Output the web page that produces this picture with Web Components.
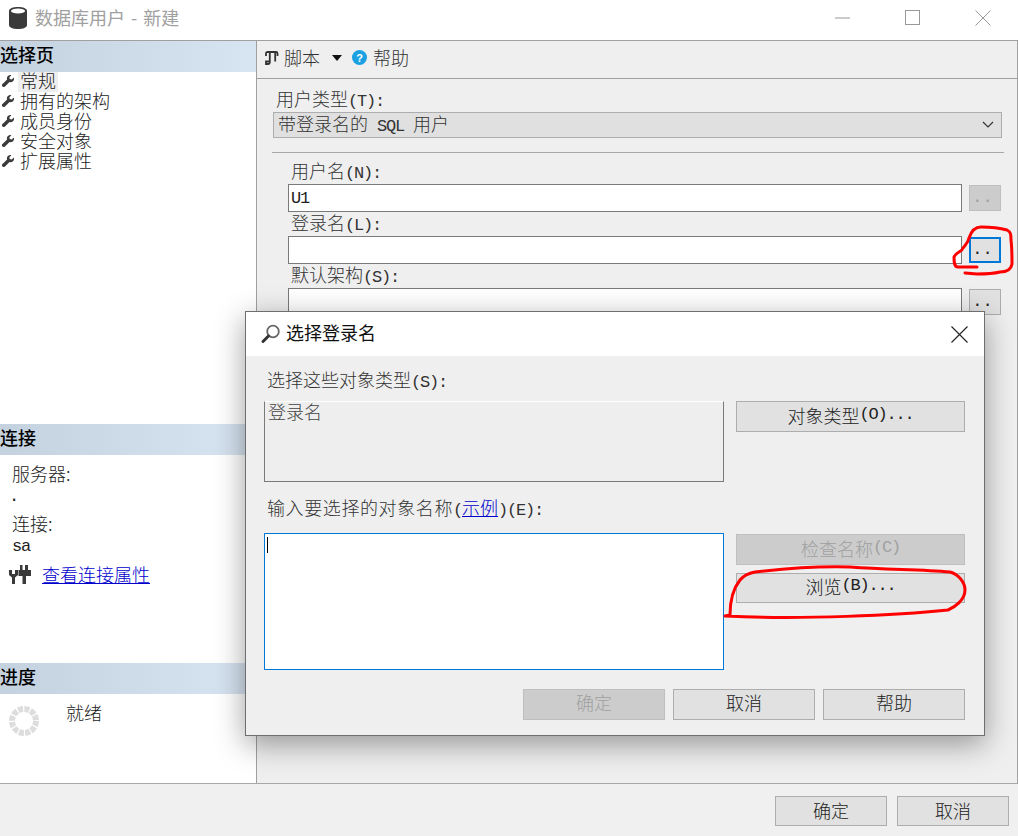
<!DOCTYPE html>
<html lang="zh"><head><meta charset="utf-8"><title>数据库用户 - 新建</title>
<style>
html,body{margin:0;padding:0;background:#f0f0f0}
body{font:18px/24px "Noto Sans CJK SC","Liberation Sans",sans-serif;color:#222;font-weight:300}
</style></head><body>
<db-app></db-app>
<script>
function def(name,css,html){
  customElements.define(name,class extends HTMLElement{
    constructor(){super();const r=this.attachShadow({mode:'open'});
      r.innerHTML='<style>'+css+'</style>'+(typeof html==='function'?html(this):html);}
  });
}
const WRENCH='<svg width="12" height="12" viewBox="0 0 12 12"><path fill="#3c3c3c" d="M8.600 0A3.400 3.400 0 0 0 5.100 4.500L.5 8.900a1.800 1.800 0 0 0 2.500 2.600L7.500 7A3.400 3.400 0 0 0 12 3.400L11.800 2.600 9.700 4.500 7.800 4 7.400 2.200 9.400 .2z"/></svg>';

def('l-t',':host{font-family:"Liberation Mono",monospace;font-size:17px;letter-spacing:-1.2px}','<slot></slot>');

def('title-bar',`:host{display:flex;align-items:center;height:40px;box-sizing:content-box;background:#fff;border-bottom:1px solid #a0a0a0;color:#a0a0a0;font-weight:400}
.w{display:flex;align-items:center;width:100%;height:35px;margin-bottom:5px}
.ic{margin:0 8px 0 9px;display:flex}.t{flex:1;word-spacing:2px;line-height:20px;padding-bottom:2px}.b{width:70px;display:flex;justify-content:center}
.r{display:flex}`,
`<div class="w"><span class="ic"><svg width="18" height="22" viewBox="0 0 18 22"><path fill="#3a3a3a" d="M0 4C0 1.500 4 0 9 0s9 1.500 9 4v14c0 2.500-4 4-9 4s-9-1.500-9-4z"/><ellipse cx="9" cy="4" rx="7" ry="2.400" fill="#fff"/></svg></span>
<span class="t">数据库用户 - 新建</span>
<span class="r">
<span class="b"><svg width="16" height="16"><path d="M0 8h15" stroke="#999"/></svg></span>
<span class="b"><svg width="16" height="16"><rect x=".5" y=".5" width="14" height="14" fill="none" stroke="#999"/></svg></span>
<span class="b"><svg width="16" height="16"><path d="M.5 .5l15 15M15.500 .5l-15 15" stroke="#999"/></svg></span>
</span></div>`);

def('side-head',`:host{display:flex;align-items:center;height:31px;box-sizing:border-box;padding-bottom:6px;background:linear-gradient(90deg,#c4d2e0,#d7e4f1);color:#000;font-weight:500}`,'<slot></slot>');

def('nav-item',`:host{display:flex;align-items:center;height:20px;color:#222}
.i{display:flex;width:18px;padding:0 0 2px 2px;box-sizing:border-box}
.t{padding:0 2px 4px;line-height:16px}:host([on]) .t{background:#eee}`,
`<span class="i">${WRENCH}</span><span class="t"><slot></slot></span>`);

def('side-panel',`:host{display:flex;flex-direction:column;width:256px;background:#fff;border-right:1px solid #a0a0a0;flex:none}
.a{height:352px}.b{height:208px;padding:10px 0 0 12px;box-sizing:border-box}.c{flex:1;display:flex}
.sp{margin:12px 0 0 9px;width:30px;height:30px}
.ln{height:16px;line-height:16px;padding-bottom:4px}.m{margin-top:10px}
.dot{margin-left:-3px}
.lk{display:flex;align-items:center;margin:10px 0 0 -3px;height:20px}
a{color:#00c;text-decoration:underline;margin-left:11px;line-height:18px;margin-bottom:2px}
.rd{margin:7px 0 0 27px;line-height:22px}`,
`<side-head>选择页</side-head>
<div class="a">
<nav-item on>常规</nav-item><nav-item>拥有的架构</nav-item><nav-item>成员身份</nav-item><nav-item>安全对象</nav-item><nav-item>扩展属性</nav-item>
</div>
<side-head>连接</side-head>
<div class="b">
<div class="ln">服务器:</div><div class="ln"><l-t class="dot">.</l-t></div>
<div class="ln m">连接:</div><div class="ln"><l-t>sa</l-t></div>
<div class="lk"><svg width="22" height="20" viewBox="0 0 22 20" fill="#3a3a3a"><path d="M0 5h3v4h3V5h3v5l-3 2.500V19H3v-6.500L0 10z"/><path d="M11 0h2.500v5H16V0h3v5h3v6h-5v8h-3.500v-8H9.500V5H11z"/></svg><a href="#">查看连接属性</a></div>
</div>
<side-head>进度</side-head>
<div class="c"><svg class="sp" viewBox="0 0 30 30"><circle cx="15" cy="15" r="12" fill="none" stroke="#ddd" stroke-width="6" stroke-dasharray="5 1.283"/></svg><span class="rd">就绪</span></div>`);

def('push-btn',`:host{display:flex;align-items:center;justify-content:center;box-sizing:border-box;background:#e1e1e1;border:1px solid #adadad;color:#222;font-size:18px;line-height:20px;white-space:nowrap;padding-bottom:4px}
:host([off]){background:#ccc;border-color:#bfbfbf;color:#a0a0a0}
:host([focus]){border:2px solid #0078d7}`,'<slot></slot>');

def('tool-bar',`:host{display:flex;align-items:center;height:37px;box-sizing:content-box;border-bottom:1px solid #a0a0a0;color:#333}
.w{display:flex;align-items:center;height:33px;margin-bottom:4px;padding-left:8px}
.s{display:flex;margin-right:5px}.c{margin:0 10px 0 12px;width:0;height:0;border:5.500px solid transparent;border-top:6px solid #111;border-bottom:0}
.h{margin-right:6px;display:flex}.x{line-height:20px;padding-bottom:2px}`,
`<div class="w"><span class="s"><svg width="14" height="14" viewBox="0 0 14 14" fill="none" stroke="#333" stroke-width="1.800"><path d="M1 5V2.500Q1 1 2.500 1H11Q12.500 1 12.500 2.500V5"/><path d="M4.800 1V11.500Q4.800 13 3.300 13H1V10.500H4.800"/><path d="M10.200 1V10.500"/></svg></span>
<span class="x">脚本</span><span class="c"></span>
<span class="h"><svg width="15" height="15" viewBox="0 0 15 15"><circle cx="7.500" cy="7.500" r="7.500" fill="#1ba1e2"/><text x="7.500" y="11.500" font-size="11" font-weight="700" font-family="Liberation Sans" text-anchor="middle" fill="#fff">?</text></svg></span>
<span class="x">帮助</span></div>`);

def('combo-box',`:host{display:flex;align-items:center;justify-content:space-between;box-sizing:border-box;height:26px;width:729px;margin-left:16px;background:#e0e0e0;border:1px solid #adadad;padding:0 7px 0 4px;color:#333}
span{line-height:20px}
svg{display:block}`,
`<span><slot></slot></span><svg width="12" height="8" viewBox="0 0 12 8"><path d="M1 1l5 5 5-5" fill="none" stroke="#333" stroke-width="1.200"/></svg>`);

def('field-row',`:host{display:block;margin-left:31px}
.l{height:24px;line-height:20px;padding-left:3px;color:#333}
.r{display:flex;align-items:center;height:28px}
.i{box-sizing:border-box;width:674px;height:28px;background:#fff;border:1px solid #7a7a7a;border-width:1px 1.500px 1.500px 1px;padding-left:2px;line-height:20px;color:#222}
push-btn{width:32px;height:26px;margin-left:7px;padding:0 5px 0 0}
.d{letter-spacing:0}`,
e=>`<div class="l"><slot name="label"></slot></div><div class="r"><div class="i"><slot name="value"></slot></div><push-btn ${e.getAttribute('btn')||''}><l-t class="d">..</l-t></push-btn></div>`);

def('main-pane',`:host{display:block;flex:1;border-right:1px solid #a0a0a0;background:#efefef}
.lb{margin:9px 0 0 19px;height:24px;line-height:20px;color:#333}
hr{border:0;height:1px;background:#a8a8a8;margin:14px 13px 7px 15px}`,
`<tool-bar></tool-bar>
<div class="lb">用户类型<l-t>(T):</l-t></div>
<combo-box>带登录名的<l-t> SQL </l-t>用户</combo-box>
<hr>
<field-row btn="off"><span slot="label">用户名<l-t>(N):</l-t></span><l-t slot="value">U1</l-t></field-row>
<field-row btn="focus"><span slot="label">登录名<l-t>(L):</l-t></span></field-row>
<field-row><span slot="label">默认架构<l-t>(S):</l-t></span></field-row>`);

def('foot-bar',`:host{display:flex;justify-content:flex-end;gap:10px;box-sizing:border-box;height:53px;border-top:1px solid #a8a8a8;padding:12px 9px 0 0;background:#f0f0f0}
push-btn{width:112px;height:30px;padding-bottom:2px}`,
`<push-btn>确定</push-btn><push-btn>取消</push-btn>`);

def('login-dialog',`:host{position:absolute;left:245px;top:311px;width:740px;height:425px;box-sizing:border-box;background:#efefef;border:1px solid #6e6e6e;box-shadow:0 8px 28px rgba(0,0,0,.38);display:block;color:#333}
.tb{height:44px;box-sizing:border-box;padding:0 0 0 14px;background:#fff;display:flex;align-items:center;color:#111;font-weight:400}
.tb svg.m{margin-right:6px}
.tt{line-height:20px;padding-bottom:4px}
.x{margin-left:auto;margin-right:16px;display:flex}
.body{padding:13px 19px 0 18px}
.lb{height:24px;line-height:20px;padding-left:3px}
.sp{letter-spacing:.6px}
.g{display:grid;grid-template-columns:460px 229px;column-gap:12px}
.list{box-sizing:border-box;height:81px;background:#eee;border:1px solid #7a7a7a;border-top:1px solid #fff;padding-left:3px;line-height:18px;color:#444}
.ta{box-sizing:border-box;height:137px;background:#fff;border:1px solid #0078d7;padding:3px 0 0 2px}
.ta i{display:block;width:1px;height:16px;background:#000}
.col{display:flex;flex-direction:column;gap:8px}
.col push-btn:first-child{height:31px;margin-top:1px}.col push-btn:last-child{height:30px}
a{color:#00c}
.ft{display:flex;justify-content:flex-end;gap:8px;margin-top:19px}
.ft push-btn{width:142px;height:31px;padding-bottom:5px}`,
`<div class="tb"><svg class="m" width="20" height="20" viewBox="0 0 20 20" fill="none"><circle cx="13" cy="7.500" r="5.800" stroke="#666" stroke-width="1.800"/><path d="M8.500 12L3 17.500" stroke="#333" stroke-width="3" stroke-linecap="round"/></svg><span class="tt">选择登录名</span>
<span class="x"><svg width="17" height="17"><path d="M.5 .5l16 16M16.500 .5l-16 16" stroke="#222" stroke-width="1.100"/></svg></span></div>
<div class="body">
<div class="lb">选择这些对象类型<l-t>(S):</l-t></div>
<div class="g" style="margin-top:8px"><div class="list">登录名</div><push-btn style="height:31px">对象类型<l-t>(O)...</l-t></push-btn></div>
<div class="lb" style="margin-top:15px"><span class="sp">输入要选择的对象名称</span><l-t>(</l-t><a href="#">示例</a><l-t>)(E):</l-t></div>
<div class="g" style="margin-top:12px"><div class="ta"><i></i></div><div class="col"><push-btn off>检查名称<l-t>(C)</l-t></push-btn><push-btn>浏览<l-t>(B)...</l-t></push-btn></div></div>
<div class="ft"><push-btn off>确定</push-btn><push-btn>取消</push-btn><push-btn>帮助</push-btn></div>
</div>`);

def('ink-marks',`:host{position:absolute;left:0;top:0;width:1018px;height:836px;pointer-events:none;display:block}
path{fill:none;stroke:#f00;stroke-width:3;stroke-linejoin:round;stroke-linecap:round}`,
`<svg width="1018" height="836">
<path d="M977 267H958C954 267 954 262 954 257C956 252 962 252 963 248C966 244 968 243 969 238C971 232 975 227 981 227C990 227 1000 228 1007 230C1011 232 1011 235 1011 240C1012 248 1012 256 1012 264C1011 270 1006 272 1000 272C992 274 985 274 977 274L965 273"/>
<path d="M725 616L730 615C730 602 732 590 740 580C744 575 750 573 755 572C790 568 820 566 850 567C890 570 920 569 950 572C958 574 965 582 965 590C965 600 955 607 948 610C900 615 800 620 725 616"/>
</svg>`);

def('db-app',`:host{display:block;position:relative;width:1018px;height:836px;overflow:hidden}
.m{display:flex;height:742px}`,
`<title-bar></title-bar><div class="m"><side-panel></side-panel><main-pane></main-pane></div><foot-bar></foot-bar><login-dialog></login-dialog><ink-marks></ink-marks>`);
</script></body></html>
